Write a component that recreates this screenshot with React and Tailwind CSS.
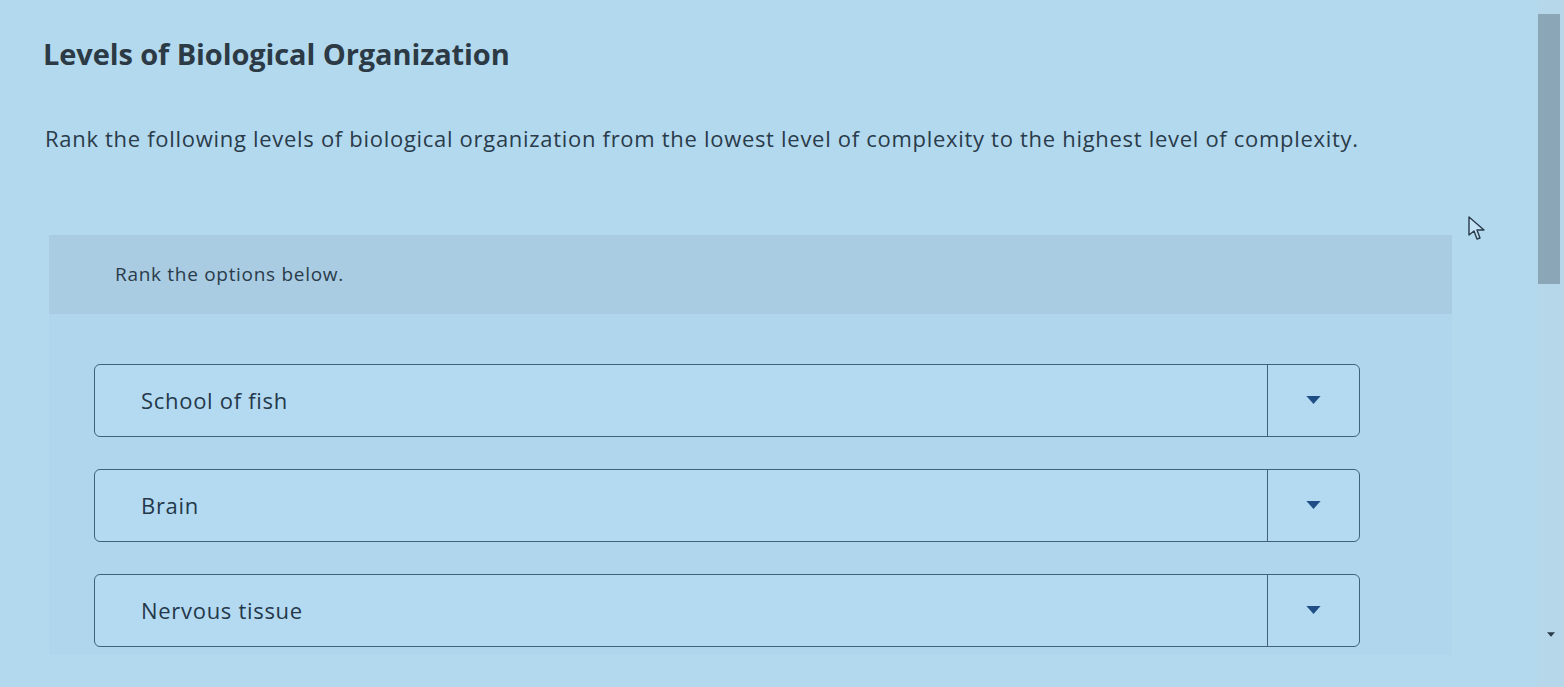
import React from 'react';

const options = ['School of fish', 'Brain', 'Nervous tissue'];

const Caret = ({ className }) => (
    <svg viewBox="0 0 16 9" className={className}>
        <path d="M0 0 H16 L8 9 Z" fill="currentColor" />
    </svg>
);

const RankRow = ({ label }) => (
    <div className="flex h-[73px] rounded-md border border-[#3f617c] bg-[#b4daf2]">
        <div className="flex flex-1 items-center pl-[46px] text-[22px] tracking-[0.7px] text-[#24384a]">{label}</div>
        <div className="flex w-[92px] items-center justify-center border-l border-[#3f617c]">
            <Caret className="h-[8px] w-[15px] text-[#1f4e86]" />
        </div>
    </div>
);

export default function App() {
    return (
        <div className="relative flex h-[687px] overflow-hidden bg-[#b3d9ef] font-['Open_Sans',sans-serif] text-[#2a3b4a]">
            {/* --- Main column --- */}
            <div className="flex-1 pl-[43px] pr-[85px] pt-[32px]">
                <h1 className="text-[29px] font-bold tracking-[-0.1px] text-[#2c3a46]">Levels of Biological Organization</h1>
                <p className="mt-[46px] pl-[2px] text-[22px] tracking-[0.7px] text-[#2a3b4a]">
                    Rank the following levels of biological organization from the lowest level of complexity to the highest level of complexity.
                </p>

                {/* --- Ranking panel --- */}
                <div className="ml-[6px] mt-[80px] bg-[#b0d6ee]">
                    <div className="flex h-[79px] items-center bg-[#a9cce2] pl-[66px] text-[19px] tracking-[0.7px] text-[#2a3b4a]">
                        Rank the options below.
                    </div>
                    <div className="flex flex-col gap-[32px] pl-[45px] pr-[92px] pt-[50px] pb-[8px]">
                        {options.map(o => <RankRow key={o} label={o} />)}
                    </div>
                </div>
            </div>

            {/* --- Scrollbar --- */}
            <div className="flex w-[27px] flex-col bg-[#b6d7ea] pt-[14px]">
                <div className="ml-[1px] h-[270px] w-[22px] bg-[#8ba6b6]" />
                <div className="flex-1" />
                <div className="mb-[50px] flex justify-center">
                    <Caret className="h-[5px] w-[8px] text-[#2a3b4a]" />
                </div>
            </div>

            {/* cursor */}
            <svg className="absolute left-[1467px] top-[215px]" width="22" height="28" viewBox="0 0 22 28">
                <path d="M2 2 L2 20 L7 16 L10 24 L13 23 L10 15 L17 15 Z" fill="#c4e3f5" stroke="#2a3b4a" strokeWidth="1.4" strokeLinejoin="round" />
            </svg>
        </div>
    );
}
